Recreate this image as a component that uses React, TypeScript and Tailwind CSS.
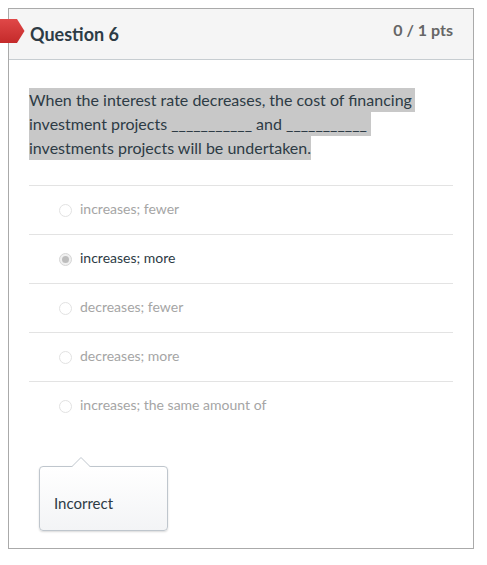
import React from "react";

const answers = [
  { text: "increases; fewer", selected: false },
  { text: "increases; more", selected: true },
  { text: "decreases; fewer", selected: false },
  { text: "decreases; more", selected: false },
  { text: "increases; the same amount of", selected: false },
];

export default function App() {
  return (
    <div className="relative w-[487px] h-[565px] bg-white pt-2 pl-2 font-['Lato',sans-serif]">
      <div className="absolute left-0 top-[19px] w-[25px] h-[24px]">
        <svg width="25" height="24" viewBox="0 0 25 24">
          <defs>
            <linearGradient id="fg" x1="0" y1="0" x2="0" y2="1">
              <stop offset="0" stopColor="#e04848" />
              <stop offset="1" stopColor="#c42a2a" />
            </linearGradient>
          </defs>
          <polygon points="0,0 17,0 24.5,12 17,24 0,24" fill="url(#fg)" />
        </svg>
      </div>
      <div className="w-[466px] h-[541px] border border-[#aaaaaa] flex flex-col">
        <div className="h-[51px] bg-[#f5f5f5] border-b border-[#c7cdd1] flex justify-between items-start pl-[21px] pr-[20px]">
          <div className="mt-[12px] text-[18px] leading-[26px] font-bold text-[#2d3b45]">Question 6</div>
          <div className="mt-[10px] text-[16px] leading-[22px] font-bold text-[#666666]">0 / 1 pts</div>
        </div>
        <div className="px-5 pt-[28px] flex flex-col">
          <div className="text-[16px] leading-[24px] text-[#2d3b45]">
            <div className="w-fit bg-[#c8c8c8] pr-[3px]">When the interest rate decreases, the cost of financing</div>
            <div className="w-fit bg-[#c8c8c8] pr-[4px]">investment projects ___________ and ___________</div>
            <div className="w-fit bg-[#c8c8c8]">investments projects will be undertaken.</div>
          </div>
          <div className="mt-[25px] flex flex-col">
            {answers.map((a, i) => (
              <div key={i} className="h-[49px] border-t border-[#e3e3e3] flex items-center pl-[30px]">
                {a.selected ? (
                  <span className="w-[13px] h-[13px] rounded-full border border-[#d6d6d6] bg-[#f0f0f0] flex items-center justify-center">
                    <span className="w-[7px] h-[7px] rounded-full bg-[#bdbdbd]" />
                  </span>
                ) : (
                  <span className="w-[13px] h-[13px] rounded-full border border-[#e2e2e2] bg-white" />
                )}
                <span className={`ml-[8px] text-[14px] leading-[18px] -mt-[2px] ${a.selected ? "text-[#2d3b45]" : "text-[#a5a5a5]"}`}>{a.text}</span>
              </div>
            ))}
          </div>
          <div className="relative mt-[36px] ml-[10px] w-[129px] h-[65px] rounded-[4px] border border-[#bfc6cd] bg-gradient-to-b from-white to-[#f3f4f6] shadow-[0_1px_2px_rgba(0,0,0,0.15)] flex items-center pl-[14px]">
            <svg className="absolute left-[31px] -top-[10px]" width="20" height="11" viewBox="0 0 20 11">
              <polygon points="0,10.5 10,0.5 20,10.5" fill="#ffffff" stroke="#bfc6cd" strokeWidth="1" />
              <rect x="0" y="10" width="20" height="2" fill="#ffffff" />
            </svg>
            <span className="text-[15px] text-[#2d3b45] mt-[10px]">Incorrect</span>
          </div>
        </div>
      </div>
    </div>
  );
}
